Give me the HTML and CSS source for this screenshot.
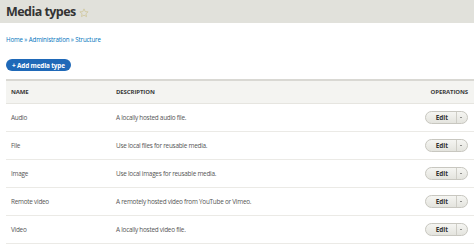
FILE: index.html
```html
<!DOCTYPE html>
<html>
<head>
<meta charset="utf-8">
<link rel="stylesheet" href="styles.css">
</head>
<body>
<header class="page-head">
  <h1 class="title">Media types</h1>
  <svg class="star" viewBox="0 0 20 20" width="10" height="10"><path d="M10 1.8l2.4 5.4 5.8.5-4.4 3.9 1.3 5.7L10 14.3l-5.1 3 1.3-5.7L1.8 7.7l5.8-.5z" fill="none" stroke="#cfc79a" stroke-width="1.6" stroke-linejoin="round"/></svg>
</header>
<main class="content">
  <nav class="crumbs"><a href="#">Home</a> » <a href="#">Administration</a> » <a href="#">Structure</a></nav>
  <div class="actions"><a class="add-btn" href="#">+ Add media type</a></div>
  <table class="types">
    <thead>
      <tr><th class="c-name">Name</th><th class="c-desc">Description</th><th class="c-ops">Operations</th></tr>
    </thead>
    <tbody>
      <tr><td>Audio</td><td>A locally hosted audio file.</td><td class="c-ops"><span class="drop"><span class="edit">Edit</span><span class="arrow"></span></span></td></tr>
      <tr><td>File</td><td>Use local files for reusable media.</td><td class="c-ops"><span class="drop"><span class="edit">Edit</span><span class="arrow"></span></span></td></tr>
      <tr><td>Image</td><td>Use local images for reusable media.</td><td class="c-ops"><span class="drop"><span class="edit">Edit</span><span class="arrow"></span></span></td></tr>
      <tr><td>Remote video</td><td>A remotely hosted video from YouTube or Vimeo.</td><td class="c-ops"><span class="drop"><span class="edit">Edit</span><span class="arrow"></span></span></td></tr>
      <tr><td>Video</td><td>A locally hosted video file.</td><td class="c-ops"><span class="drop"><span class="edit">Edit</span><span class="arrow"></span></span></td></tr>
    </tbody>
  </table>
</main>
</body>
</html>
```
FILE: styles.css
```css
html, body {
  margin: 0;
  padding: 0;
  background: #ffffff;
  font-family: "Open Sans", "Noto Sans", sans-serif;
  color: #333;
}
.page-head {
  height: 23px;
  background: #e1e1db;
  display: flex;
  align-items: center;
  padding-left: 6px;
  gap: 3px;
  box-sizing: border-box;
  padding-top: 2px;
}
.title {
  margin: 0;
  font-size: 12.5px;
  font-weight: 700;
  letter-spacing: -0.55px;
  color: #333;
  line-height: 1;
}
.star {
  display: block;
}
.content {
  padding: 0 0 0 6px;
}
.crumbs {
  font-size: 6.2px;
  letter-spacing: -0.15px;
  color: #0074bd;
  margin-top: 13px;
  line-height: 8px;
}
.crumbs a {
  color: #0074bd;
  text-decoration: none;
}
.actions {
  margin-top: 15px;
  display: flex;
}
.add-btn {
  display: inline-flex;
  align-items: center;
  height: 12px;
  padding: 0 6px;
  border-radius: 7px;
  background: #1f69b8;
  color: #fff;
  font-size: 6.4px;
  font-weight: 700;
  letter-spacing: -0.15px;
  text-decoration: none;
}
.types {
  margin-top: 8px;
  width: 100%;
  border-collapse: collapse;
  border-top: 2px solid #d9d8d3;
  font-size: 6.4px;
  letter-spacing: -0.25px;
}
.types th {
  background: #f4f4f1;
  height: 22px;
  padding: 0 5px;
  text-align: left;
  font-size: 6px;
  font-weight: 700;
  text-transform: uppercase;
  letter-spacing: -0.1px;
  color: #3a3a3a;
  border-bottom: 1px solid #e6e5e0;
}
.types th.c-ops {
  text-align: right;
  padding-right: 6px;
}
.types td {
  height: 27px;
  padding: 0 5px;
  color: #555;
  border-bottom: 1px solid #ebeae6;
  vertical-align: middle;
}
.types .c-name { width: 95px; }
.types td.c-ops {
  text-align: right;
  padding-right: 6px;
}
.drop {
  display: inline-flex;
  height: 13px;
  border: 1px solid #c8c7c0;
  border-radius: 7px;
  background: linear-gradient(#f5f5f2, #e4e4de);
  box-sizing: border-box;
  overflow: hidden;
  vertical-align: middle;
}
.edit {
  display: flex;
  align-items: center;
  padding: 0 8px 0 10px;
  font-size: 6.4px;
  font-weight: 700;
  letter-spacing: 0;
  color: #333;
}
.arrow {
  width: 10px;
  border-left: 1px solid #cfcec7;
  position: relative;
}
.arrow::after {
  content: "";
  position: absolute;
  left: 3px;
  top: 5px;
  border-left: 1.5px solid transparent;
  border-right: 1.5px solid transparent;
  border-top: 1.5px solid #333;
}
```
